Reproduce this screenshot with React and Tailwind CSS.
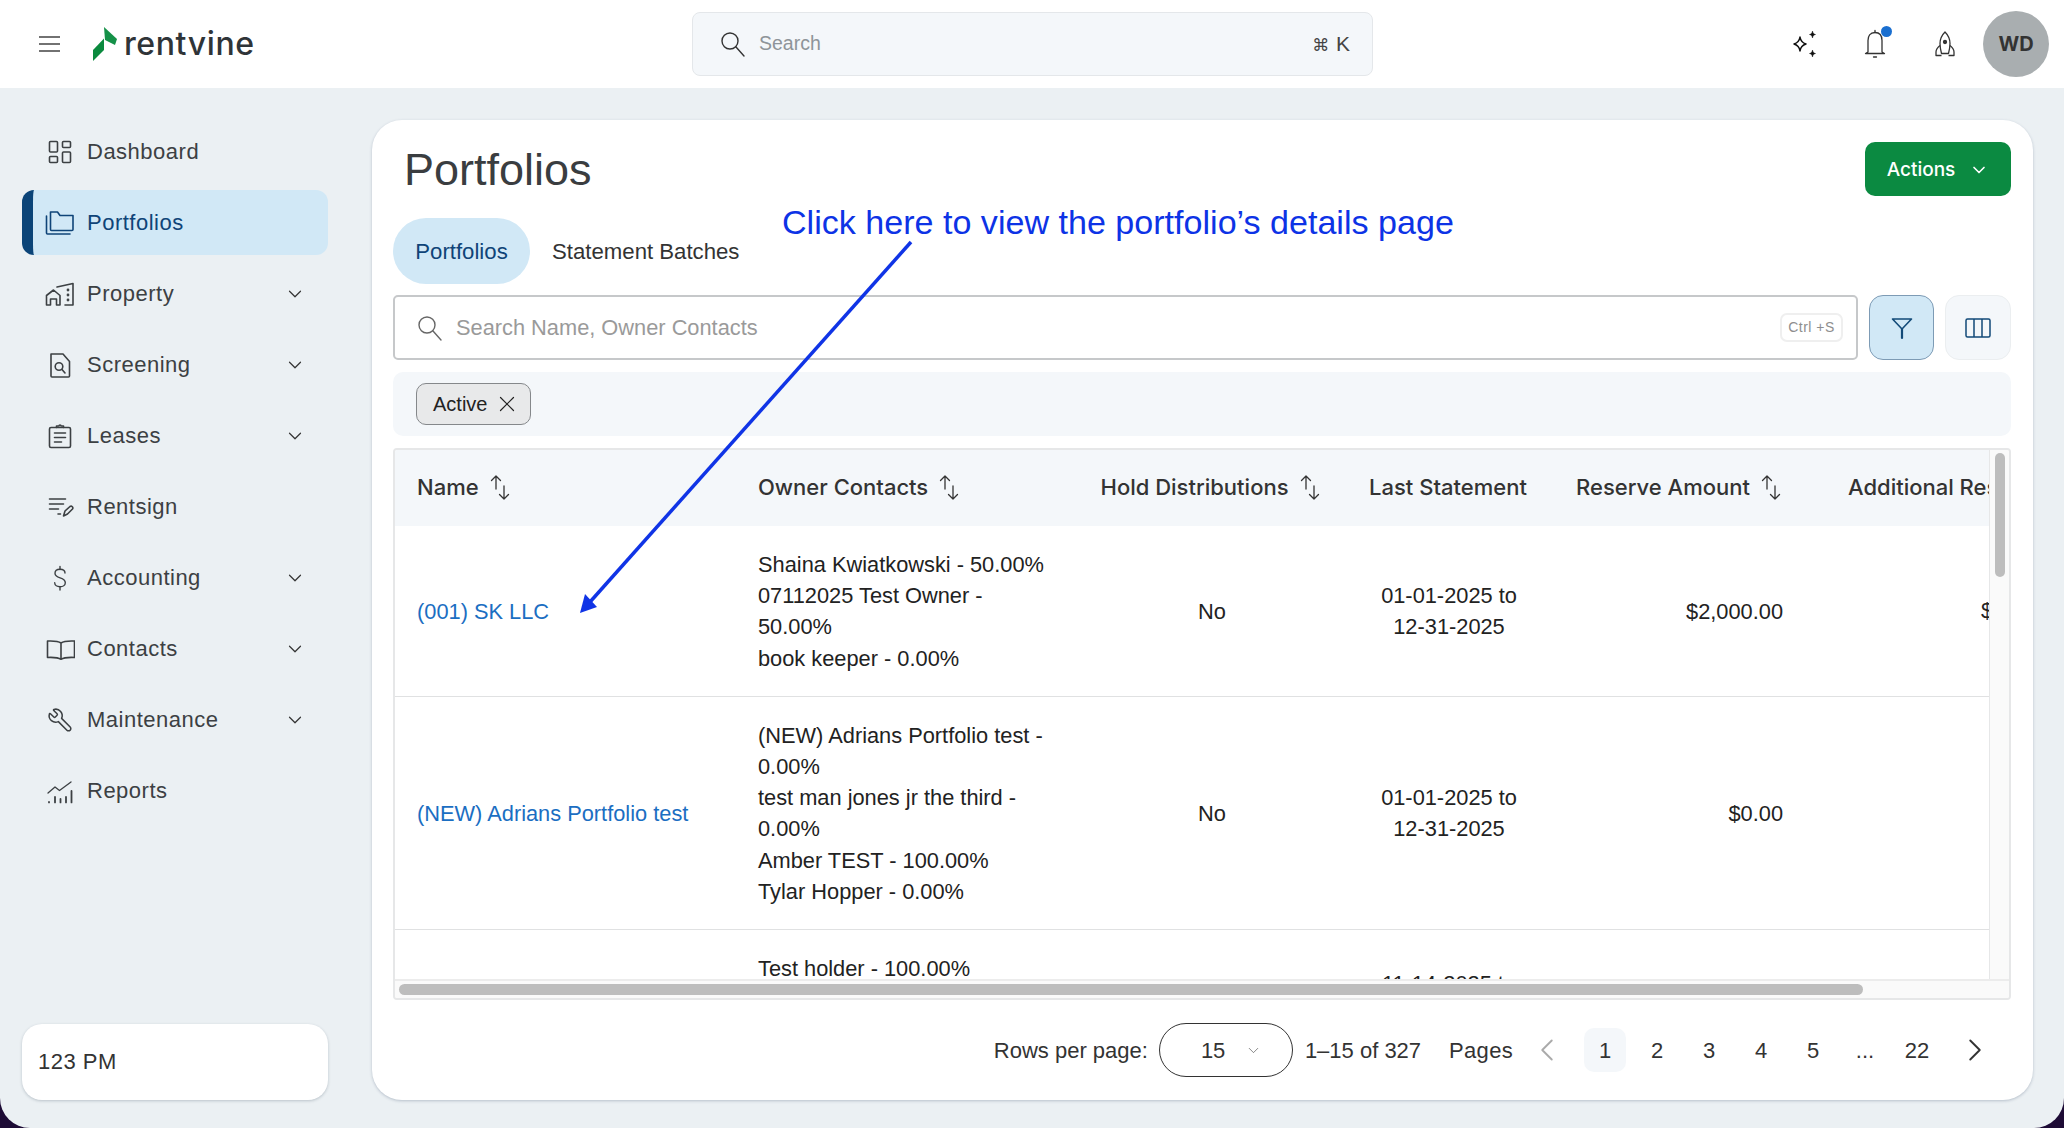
import React from "react";
import { ChevronDown, ChevronLeft, ChevronRight, X, Wrench } from "lucide-react";

const Ico = ({ children, w = 28, h = 28, vb = "0 0 28 28", sw = 1.6, className = "" }) => (
  <svg width={w} height={h} viewBox={vb} fill="none" stroke="currentColor" strokeWidth={sw} strokeLinecap="round" strokeLinejoin="round" className={className}>
    {children}
  </svg>
);

const icons = {
  dashboard: (
    <Ico>
      <rect x="3.500" y="3.500" width="8" height="10.500" rx="1" /><rect x="16.500" y="3.500" width="8" height="6" rx="1" />
      <rect x="3.500" y="18.500" width="8" height="6" rx="1" /><rect x="16.500" y="14" width="8" height="10.500" rx="1" />
    </Ico>
  ),
  folder: (
    <Ico w={30} vb="0 0 30 28">
      <path d="M5.500 3h7l2.500 3.500h13v14a1 1 0 0 1-1 1H6.500a1 1 0 0 1-1-1z" />
      <path d="M1.500 7v17a1 1 0 0 0 1 1H25" />
    </Ico>
  ),
  property: (
    <Ico w={30} vb="0 0 30 28">
      <path d="M1.500 25V15.500L8.500 10l6.500 5.500V25h-3.500v-6h-6v6z" />
      <path d="M12 7l16-3.500V25h-8" />
      <circle cx="23" cy="10" r=".6" fill="currentColor" /><circle cx="23" cy="15" r=".6" fill="currentColor" /><circle cx="23" cy="20" r=".6" fill="currentColor" />
    </Ico>
  ),
  screening: (
    <Ico>
      <path d="M5 3h12l6.500 7.500V25a1 1 0 0 1-1 1H6a1 1 0 0 1-1-1z" />
      <circle cx="13" cy="15.500" r="3.800" /><path d="M16 18.500l3 3.500" />
    </Ico>
  ),
  leases: (
    <Ico>
      <rect x="3.500" y="5.500" width="21" height="20" rx="1.500" /><path d="M10.500 5.500V4h2.500a1 1 0 0 1 2 0h2.500v1.500" />
      <path d="M8.500 11h11M8.500 15.500h11M8.500 20h7" />
    </Ico>
  ),
  rentsign: (
    <Ico>
      <path d="M3.500 6h16M3.500 11h14M3.500 16h9M12 21h2.500" />
      <path d="M17.500 23l1.500-5 5-4.500a1.800 1.800 0 0 1 2.500 2.500l-5 5z" />
    </Ico>
  ),
  dollar: (
    <Ico sw={1.4}>
      <path d="M19 9c0-2.500-2.400-3.800-5-3.800S9 6.600 9 9.200c0 6 10.300 3.400 10.300 9.500 0 2.700-2.600 4.100-5.300 4.100s-5.300-1.400-5.300-4" />
      <path d="M14 2.500v3M14 23v3" />
    </Ico>
  ),
  contacts: (
    <Ico w={30}>
      <path d="M15 8c-2.500-1.800-7-2.300-13.500-2v16.500c6.500-.3 11 .2 13.500 1.800 2.500-1.600 7-2.100 13.500-1.800V6C22 5.700 17.500 6.200 15 8zM15 8v16" />
    </Ico>
  ),
  maintenance: <Wrench size={26} strokeWidth={1.4} className="-scale-x-100" />,
  reports: (
    <Ico sw={1.3}>
      <path d="M2 16l7-6 4.500 3.500L25 5" />
      <path d="M3 25v.4M9 20v5.400M14.500 22v3.400M20 20v5.400M25.500 14v11.400" strokeWidth="1.800" />
    </Ico>
  ),
};

const nav = [
  ["Dashboard", "dashboard", false],
  ["Portfolios", "folder", false, true],
  ["Property", "property", true],
  ["Screening", "screening", true],
  ["Leases", "leases", true],
  ["Rentsign", "rentsign", false],
  ["Accounting", "dollar", true],
  ["Contacts", "contacts", true],
  ["Maintenance", "maintenance", true],
  ["Reports", "reports", false],
];

const SortIcon = () => (
  <svg width="22" height="26" viewBox="0 0 22 26" fill="none" stroke="#333" strokeWidth="1.300" strokeLinecap="round" strokeLinejoin="round" className="ml-[11px] shrink-0">
    <path d="M6 15V2M1.500 6.500 6 2l4.500 4.500" /><path d="M14 12v13M9.500 20.500 14 25l4.500-4.500" />
  </svg>
);

const SearchGlyph = ({ color }) => (
  <svg width="26" height="26" viewBox="0 0 26 26" fill="none" stroke={color} strokeWidth="1.400" strokeLinecap="round" className="shrink-0">
    <circle cx="10" cy="10" r="8" /><path d="M15.800 15.800 24 25" />
  </svg>
);

const rows = [
  { name: "(001) SK LLC", owners: ["Shaina Kwiatkowski - 50.00%", "07112025 Test Owner - 50.00%", "book keeper - 0.00%"], hold: "No", date: ["01-01-2025 to", "12-31-2025"], res: "$2,000.00", add: "$500.00" },
  { name: "(NEW) Adrians Portfolio test", owners: ["(NEW) Adrians Portfolio test - 0.00%", "test man jones jr the third - 0.00%", "Amber TEST - 100.00%", "Tylar Hopper - 0.00%"], hold: "No", date: ["01-01-2025 to", "12-31-2025"], res: "$0.00", add: "" },
  { name: "", owners: ["Test holder - 100.00%"], hold: "", date: ["11-14-2025 to", "11-14-2026"], res: "", add: "", min: "min-h-[139px]" },
];

export default function App() {
  return (
    <div className="w-[2064px] h-[1128px] overflow-hidden bg-[#1d0b35] font-['Liberation_Sans',Arial,sans-serif] text-[#333]">
      <div className="relative w-full h-full bg-[#ebf0f3] rounded-b-[30px] overflow-hidden flex flex-col">
        {/* top bar */}
        <header className="h-[88px] shrink-0 bg-white flex items-center relative">
          <div className="w-[372px] flex items-center">
            <svg width="24" height="18" viewBox="0 0 24 18" fill="none" stroke="#444" strokeWidth="1.500" className="ml-[38px]">
              <path d="M1 2h21M1 9h21M1 16h21" />
            </svg>
            <svg width="24" height="34" viewBox="0 0 24 34" className="ml-[31px]">
              <path d="M11 0 24 12l-2 6-10-5z" fill="#159148" />
              <path d="M11 11.500 0 23v11l11-11z" fill="#0b8a3e" />
            </svg>
            <span className="ml-[7px] text-[32px] leading-none font-['Inter',sans-serif] font-medium text-[#2f3438] tracking-[0.600px]">rentvine</span>
          </div>
          <div className="ml-[320px] w-[681px] h-[64px] rounded-[8px] bg-[#f4f7fa] border border-[#e4e7ea] flex items-center pl-[27px] pr-[22px]">
            <SearchGlyph color="#333" />
            <span className="ml-[13px] text-[19.500px] text-[#8e9499]">Search</span>
            <span className="ml-auto text-[21px] text-[#444] font-['DejaVu_Sans',sans-serif] whitespace-pre"><span className="text-[17px]">⌘</span> <span className="font-['Liberation_Sans',sans-serif]">K</span></span>
          </div>
          <div className="ml-auto flex items-center pr-[15px]">
            <svg width="28" height="28" viewBox="0 0 28 28" fill="none" stroke="#111" strokeWidth="1.500" strokeLinejoin="round" className="-ml-[1px]">
              <path d="M9 7c.6 4 2.500 6 6 7-3.500 1-5.400 3-6 7-.6-4-2.500-6-6-7 3.500-1 5.400-3 6-7z" />
              <path d="M21.500 1c.3 2 1 3 3 3.500-2 .5-2.700 1.500-3 3.500-.3-2-1-3-3-3.500 2-.5 2.700-1.500 3-3.500zM21.500 20c.3 2 1 3 3 3.500-2 .5-2.700 1.500-3 3.500-.3-2-1-3-3-3.500 2-.5 2.700-1.500 3-3.500z" fill="#111" strokeWidth="0.500" />
            </svg>
            <div className="relative ml-[42px]">
              <svg width="28" height="30" viewBox="0 0 28 30" fill="none" stroke="#333" strokeWidth="1.300" strokeLinecap="round" strokeLinejoin="round">
                <path d="M14 3.500c-5 0-7 3.500-7 8V23l-2.500 1.500h19L21 23V11.500c0-4.500-2-8-7-8z" /><path d="M14 1.500v2M12.500 28h3" />
              </svg>
              <span className="absolute -top-[3px] right-[-3px] w-[11px] h-[11px] rounded-full bg-[#1a6fd0]" />
            </div>
            <svg width="26" height="28" viewBox="0 0 26 28" fill="none" stroke="#333" strokeWidth="1.300" strokeLinejoin="round" className="ml-[43px]">
              <path d="M13 2c-3.500 3.500-5 7.500-5 11.500 0 3.500.7 7 1.500 10h7c.8-3 1.500-6.500 1.500-10 0-4-1.500-8-5-11.500z" />
              <path d="M8 15.500c-2.500 2-4 4-4 6.500v3.500h5.500M18 15.500c2.500 2 4 4 4 6.500v3.500h-5.500" /><circle cx="13" cy="12" r="1.500" fill="#333" />
            </svg>
            <div className="ml-[25px] w-[66px] h-[66px] rounded-full bg-[#a9aeb0] flex items-center justify-center text-[20px] font-['Inter',sans-serif] font-bold text-[#333]">WD</div>
          </div>
        </header>

        <div className="flex-1 flex pt-[32px] pb-[28px] pr-[31px] min-h-0">
          {/* sidebar */}
          <aside className="w-[372px] shrink-0 pl-[22px] pr-[44px] flex flex-col">
            <nav className="flex flex-col gap-[6px] -mt-[1px]">
              {nav.map(([label, ic, chev, active]) => (
                <div key={label} className={`h-[65px] rounded-[12px] flex items-center pr-[24px] ${active ? "bg-[#d1e8f6] border-l-[11px] border-[#0b4478] text-[#0f4478]" : "text-[#3c4043]"}`}>
                  <span className={`w-[30px] flex justify-center ${active ? "ml-[12px]" : "ml-[23px]"}`}>{icons[ic]}</span>
                  <span className="ml-[12px] text-[22px] tracking-[0.500px]">{label}</span>
                  {chev && <ChevronDown size={22} strokeWidth={1.300} className="ml-auto -translate-x-[-2px] text-[#333]" />}
                </div>
              ))}
            </nav>
            <div className="mt-auto h-[76px] rounded-[20px] bg-white shadow-[0_1px_3px_rgba(40,60,80,0.25)] flex items-center pl-[16px] pb-[2px] text-[22px] tracking-[0.500px]">123 PM</div>
          </aside>

          {/* main card */}
          <main className="flex-1 min-w-0 bg-white rounded-[30px] shadow-[0_1px_3px_rgba(60,80,110,0.3)] pt-[22px] pl-[21px] pr-[22px] flex flex-col">
            <div className="flex items-center justify-between h-[54px] shrink-0">
              <h1 className="ml-[11px] mt-[1px] text-[45px] font-normal text-[#3a3d40] leading-none">Portfolios</h1>
              <button className="w-[146px] h-[54px] pt-[2px] rounded-[10px] bg-[#0b8a41] text-white text-[19px] font-['Inter',sans-serif] font-medium flex items-center justify-center gap-[14px]">
                Actions <ChevronDown size={20} strokeWidth={2} />
              </button>
            </div>
            <div className="flex items-center mt-[22px] h-[66px] shrink-0 text-[22.200px]">
              <span className="w-[137px] h-[66px] pt-[1px] rounded-[33px] bg-[#d1e8f6] text-[#0f4478] flex items-center justify-center">Portfolios</span>
              <span className="ml-[22px] mt-[1px] text-[#333]">Statement Batches</span>
            </div>
            <div className="flex gap-[11px] mt-[11px] h-[65px] shrink-0">
              <div className="flex-1 border-2 border-[#c6c8ca] rounded-[5px] flex items-center pl-[22px] pr-[13px]">
                <SearchGlyph color="#666" />
                <span className="ml-[13px] mt-[1px] text-[21.800px] text-[#9a9a9a]">Search Name, Owner Contacts</span>
                <span className="ml-auto w-[63px] h-[29px] border-2 border-[#efefef] rounded-[7px] text-[14px] tracking-[0.500px] text-[#8e8e8e] flex items-center justify-center">Ctrl +S</span>
              </div>
              <div className="w-[65px] rounded-[14px] bg-[#d1e8f6] border border-[#7d9bb5] flex items-center justify-center">
                <svg width="22" height="24" viewBox="0 0 22 24" fill="none" stroke="#124a78" strokeWidth="1.600" strokeLinejoin="round"><path d="M1.500 3h19L11 13z" /><path d="M11 13v9" strokeWidth="2.200" strokeLinecap="round" /></svg>
              </div>
              <div className="w-[66px] rounded-[14px] bg-[#f4f7fa] border border-[#ebeef0] flex items-center justify-center">
                <svg width="26" height="22" viewBox="0 0 26 22" fill="none" stroke="#124a78" strokeWidth="1.500"><rect x="1" y="2" width="24" height="18" rx="1.500" /><path d="M9 2v18M17 2v18" /></svg>
              </div>
            </div>
            <div className="mt-[12px] h-[64px] shrink-0 rounded-[10px] bg-[#f4f7fa] flex items-center pl-[23px]">
              <span className="w-[115px] h-[42px] rounded-[10px] bg-[#e8e9ea] border border-[#85888b] flex items-center pl-[16px] pb-[1px] text-[20px] text-[#222]">
                Active <X size={26} strokeWidth={1.100} className="ml-[7px]" />
              </span>
            </div>

            {/* table */}
            <div className="mt-[12px] h-[552px] shrink-0 border-2 border-[#e6e7e8] rounded-[4px] flex flex-col overflow-hidden">
              <div className="flex-1 min-h-0 flex">
                <div className="flex-1 min-w-0 overflow-hidden">
                  <div className="w-[1700px]">
                    <div className="flex h-[76px] pb-[2px] bg-[#f4f7fa] items-center text-[22px] font-['Inter',sans-serif] font-medium text-[#333]">
                      <div className="w-[341px] pl-[22px] flex items-center">Name <SortIcon /></div>
                      <div className="w-[341px] pl-[22px] flex items-center">Owner Contacts <SortIcon /></div>
                      <div className="w-[268px] flex items-center justify-center">Hold Distributions <SortIcon /></div>
                      <div className="w-[206px] text-center whitespace-nowrap">Last Statement</div>
                      <div className="w-[255px] pr-[23px] flex items-center justify-end whitespace-nowrap">Reserve Amount <SortIcon /></div>
                      <div className="pl-[42px] whitespace-nowrap">Additional Reserve</div>
                    </div>
                    {rows.map((r, i) => (
                      <div key={i} className={`flex items-center text-[21.800px] leading-[31.200px] text-[#222] border-b border-[#e0e1e2] ${r.min || ""}`}>
                        <div className="w-[341px] pl-[22px] pt-[1px] text-[#1b6ec2]">{r.name}</div>
                        <div className="w-[341px] pl-[22px] pr-[23px] pt-[23px] pb-[22px] self-start">
                          {r.owners.map((o) => <div key={o}>{o}</div>)}
                        </div>
                        <div className="w-[270px] pt-[1px] text-center">{r.hold}</div>
                        <div className="w-[204px] pt-[1px] text-center">{r.date.map((d) => <div key={d}>{d}</div>)}</div>
                        <div className="w-[255px] pt-[1px] pr-[23px] text-right">{r.res}</div>
                        <div className="pl-[175px]">{r.add}</div>
                      </div>
                    ))}
                  </div>
                </div>
                <div className="w-[20px] shrink-0 bg-[#fafafa] border-l border-[#e6e7e8] pt-[3px] pl-[5px]">
                  <div className="w-[10px] h-[124px] rounded-full bg-[#bdbdbd]" />
                </div>
              </div>
              <div className="h-[19px] shrink-0 bg-[#fafafa] border-t-2 border-[#ececec] pt-[3px] pl-[4px]">
                <div className="w-[1464px] h-[11px] rounded-full bg-[#bdbdbd]" />
              </div>
            </div>

            {/* pagination */}
            <div className="flex-1 flex items-center justify-end pr-[17px] text-[22px] text-[#333] whitespace-nowrap">
              <span>Rows per page:</span>
              <div className="ml-[11px] w-[134px] h-[54px] rounded-[27px] border-[1.500px] border-[#333] flex items-center pl-[41px]">
                <span>15</span><ChevronDown size={17} strokeWidth={1} className="ml-[20px] text-[#555]" />
              </div>
              <span className="ml-[12px]">1–15 of 327</span>
              <span className="ml-[28px] tracking-[0.300px]">Pages</span>
              <ChevronLeft size={38} strokeWidth={1.200} className="ml-[15px] text-[#aaa]" />
              <span className="ml-[18px] mr-[5px] w-[42px] h-[44px] rounded-[10px] bg-[#f4f7fa] flex items-center justify-center">1</span>
              {["2", "3", "4", "5", "...", "22"].map((p) => (
                <span key={p} className="w-[52px] text-center">{p}</span>
              ))}
              <ChevronRight size={38} strokeWidth={1.200} className="ml-[13px] text-[#333]" />
            </div>
          </main>
        </div>

        {/* annotation */}
        <span className="absolute left-[782px] top-[200px] text-[34.100px] leading-[44px] text-[#0d33e6] whitespace-nowrap">Click here to view the portfolio’s details page</span>
        <svg width="360" height="400" viewBox="0 0 360 400" fill="none" className="absolute left-[570px] top-[232px]">
          <path d="M341 10 L20 370" stroke="#1034e6" strokeWidth="3.500" />
          <path d="M10 381 L15 362 L27 375 Z" fill="#1034e6" />
        </svg>
      </div>
    </div>
  );
}
